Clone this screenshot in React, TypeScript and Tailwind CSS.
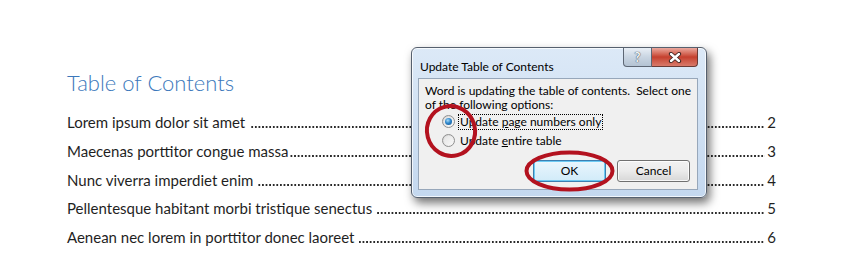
import React from 'react';

const entries = [
  ['Lorem ipsum dolor sit amet ', '2'],
  ['Maecenas porttitor congue massa', '3'],
  ['Nunc viverra imperdiet enim ', '4'],
  ['Pellentesque habitant morbi tristique senectus ', '5'],
  ['Aenean nec lorem in porttitor donec laoreet ', '6'],
];

const Radio = ({ checked }: { checked?: boolean }) => (
  <span className="flex h-[13px] w-[13px] items-center justify-center rounded-full border border-[#8f8f8f] bg-gradient-to-br from-[#d4d4d4] to-[#fbfbfb]">
    <span className="flex h-[9px] w-[9px] items-center justify-center rounded-full bg-gradient-to-br from-[#e4e4e4] to-[#f8f8f8]">
      {checked && (
        <span className="h-[7px] w-[7px] rounded-full bg-[radial-gradient(circle_at_40%_35%,#a9dcf8_0,#2d86cb_45%,#124f8c_100%)]" />
      )}
    </span>
  </span>
);

const UpdateTocDialog = () => (
  <div className="absolute left-[411px] top-[47px] flex h-[151px] w-[296px] flex-col rounded-[6px] border border-[#56606e] bg-gradient-to-b from-[#dce9f7] to-[#c4d8ef] shadow-[inset_0_0_0_1px_rgba(255,255,255,0.75),3px_5px_10px_rgba(0,0,0,0.55)] font-['Lato',sans-serif] text-[12px] text-black">
    {/* title bar */}
    <div className="flex h-[30px] items-start justify-between">
      <div className="pl-[8px] pt-[12px] leading-[14px]">Update Table of Contents</div>
      <div className="mr-[8px] flex">
        <div className="flex h-[19px] w-[29px] items-center justify-center rounded-bl-[4px] border border-t-0 border-[#5d6674] bg-gradient-to-b from-[#e9eff6] via-[#c9d5e2] to-[#b4c3d3] text-[13px] font-bold leading-none text-[#f4f6f8] [text-shadow:0_0_1px_#3c4450,0_0_1px_#3c4450]">
          ?
        </div>
        <div className="flex h-[19px] w-[46px] items-center justify-center rounded-br-[4px] border border-l-0 border-t-0 border-[#6a3a35] bg-gradient-to-b from-[#eaa89e] via-[#c53f2e] to-[#d8796a]">
          <svg width="14" height="11" viewBox="0 0 14 11">
            <path d="M3 2 L11 9 M11 2 L3 9" stroke="#3a2220" strokeWidth="4.2" strokeLinecap="round" />
            <path d="M3 2 L11 9 M11 2 L3 9" stroke="#ffffff" strokeWidth="2.4" strokeLinecap="round" />
          </svg>
        </div>
      </div>
    </div>

    {/* client area */}
    <div className="ml-[6px] mr-[8px] flex h-[112px] flex-col border border-[#97a7ba] bg-[#f0f0f0] px-[6px] pt-[5px]">
      <div className="whitespace-pre leading-[14px]">Word is updating the table of contents.  Select one</div>
      <div className="leading-[14px]">of the following options:</div>

      <div className="ml-[17px] flex h-[19px] items-center">
        <Radio checked />
        <span className="ml-[3px] border border-dotted border-black px-[1px] leading-[14px]">
          Update <span className="underline">p</span>age numbers only
        </span>
      </div>
      <div className="ml-[17px] flex h-[19px] items-center">
        <Radio />
        <span className="ml-[4px] px-[1px] leading-[14px]">
          Update <span className="underline">e</span>ntire table
        </span>
      </div>

      <div className="mt-[10px] flex justify-end gap-[11px] pr-[1px]">
        <button className="h-[22px] w-[73px] rounded-[3px] border border-[#3c7fb1] bg-gradient-to-b from-[#eaf6fd] to-[#d1ebf9] shadow-[inset_0_0_0_1px_#6ccaf4] leading-none">
          OK
        </button>
        <button className="h-[22px] w-[73px] rounded-[3px] border border-[#707070] bg-gradient-to-b from-[#f2f2f2] via-[#ebebeb] to-[#d7d7d7] shadow-[inset_0_0_0_1px_rgba(255,255,255,0.8)] leading-none">
          Cancel
        </button>
      </div>
    </div>
  </div>
);

export default function App() {
  return (
    <div className="relative h-[271px] w-[846px] overflow-hidden bg-white">
      <div className="pl-[67px] pt-[68px] font-['Lato',sans-serif]">
        <h1 className="text-[22px] font-light leading-[30px] text-[#3b78bb]">Table of Contents</h1>
        <div className="mt-[10px] flex w-[709px] flex-col text-[15px] text-[#1f1f1f]">
          {entries.map(([title, page]) => (
            <div key={page} className="flex h-[28.75px] items-stretch leading-[28.75px]">
              <span className="whitespace-pre">{title}</span>
              {/* dot leader */}
              <span className="ml-[1px] mr-[2px] flex-1 bg-[linear-gradient(to_right,#2a2a2a_1.4px,transparent_1.4px)] bg-[length:3.6px_1.5px] bg-[position:right_18px] bg-repeat-x" />
              <span>{page}</span>
            </div>
          ))}
        </div>
      </div>

      <UpdateTocDialog />

      {/* annotation marks */}
      <svg className="pointer-events-none absolute left-0 top-0" width="846" height="271" viewBox="0 0 846 271">
        <ellipse cx="451" cy="131" rx="24" ry="25" transform="rotate(-15 451 131)" fill="none" stroke="#b3121f" strokeWidth="4" />
        <ellipse cx="569.5" cy="171" rx="43" ry="18.5" fill="none" stroke="#b3121f" strokeWidth="4" />
      </svg>
    </div>
  );
}
